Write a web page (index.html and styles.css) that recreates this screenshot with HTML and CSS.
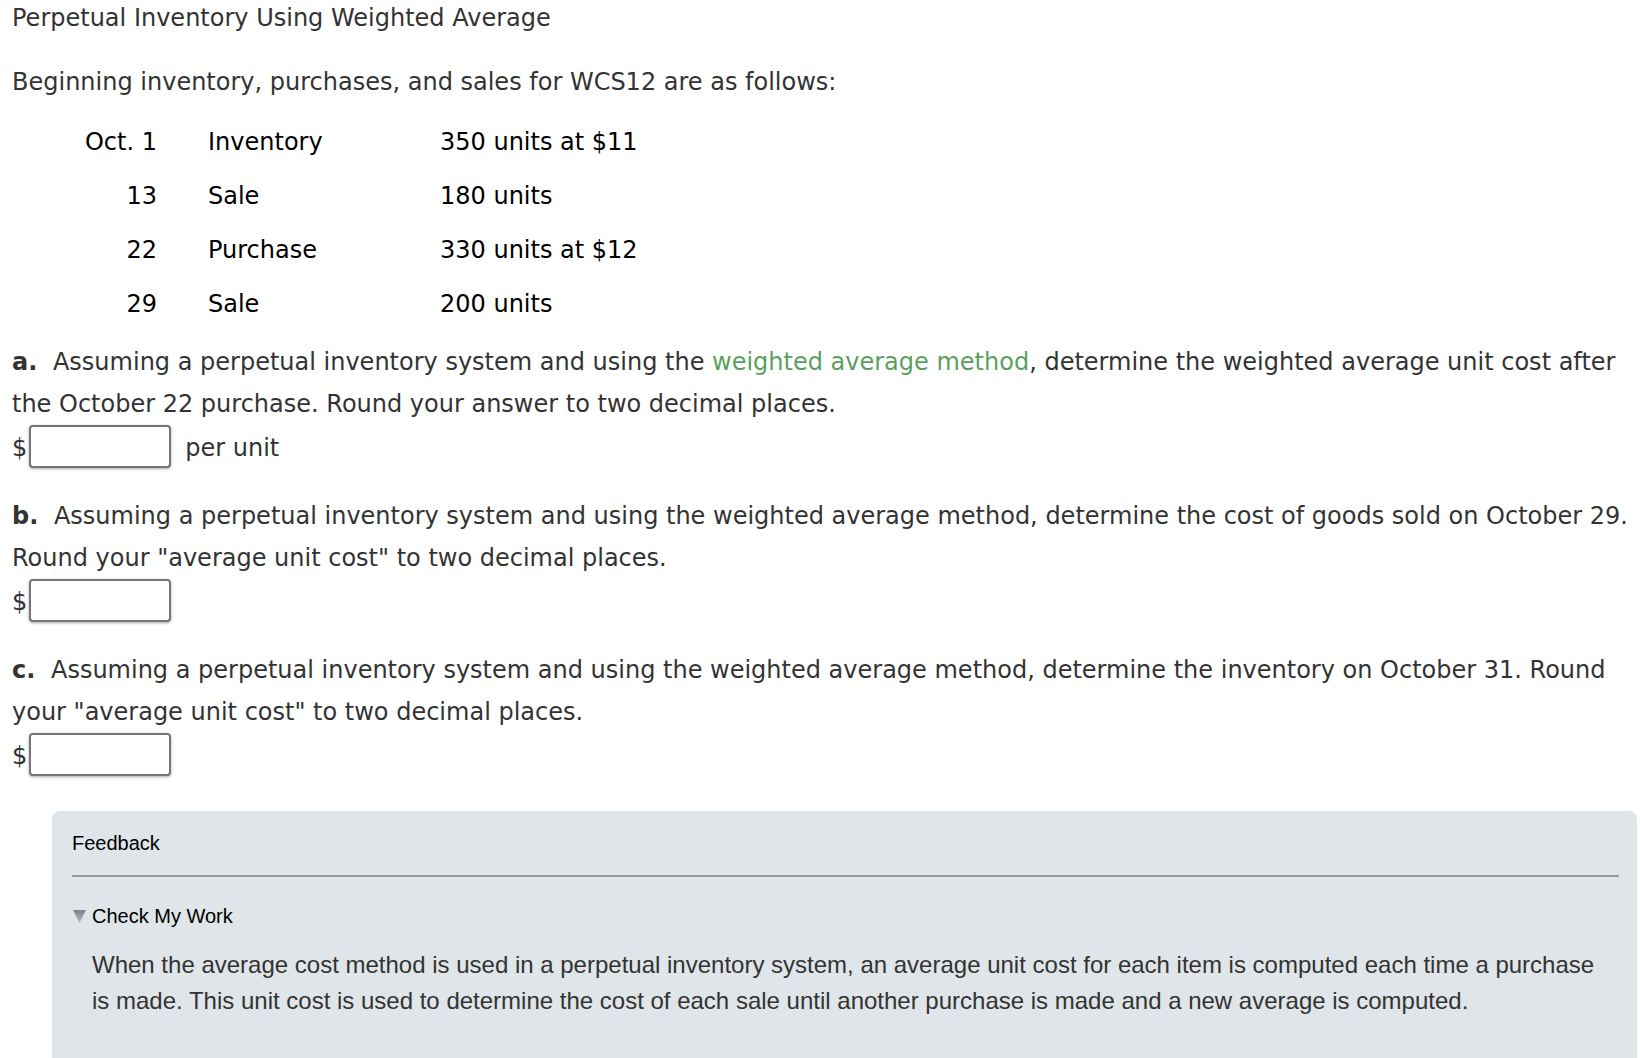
FILE: index.html
```html
<!DOCTYPE html>
<html lang="en">
<head>
  <meta charset="UTF-8" />
  <title>Perpetual Inventory Using Weighted Average</title>
  <link rel="stylesheet" href="styles.css">
</head>
<body>

  <div class="problem">
    <div class="title">Perpetual Inventory Using Weighted Average</div>

    <p class="intro">Beginning inventory, purchases, and sales for WCS12 are as follows:</p>

    <!-- Inventory transactions -->
    <table class="inv-table">
      <tr>
        <td class="date">Oct. 1</td>
        <td class="desc">Inventory</td>
        <td class="qty">350 units at $11</td>
      </tr>
      <tr>
        <td class="date">13</td>
        <td class="desc">Sale</td>
        <td class="qty">180 units</td>
      </tr>
      <tr>
        <td class="date">22</td>
        <td class="desc">Purchase</td>
        <td class="qty">330 units at $12</td>
      </tr>
      <tr>
        <td class="date">29</td>
        <td class="desc">Sale</td>
        <td class="qty">200 units</td>
      </tr>
    </table>

    <!-- Part a -->
    <div class="question first">
      <p><b class="part">a.</b> Assuming a perpetual inventory system and using the <span class="term">weighted average method</span>, determine the weighted average unit cost after the October 22 purchase. Round your answer to two decimal places.</p>
      <div class="answer">
        <span class="currency">$</span>
        <input type="text" class="answer-input">
        <span class="unit">per unit</span>
      </div>
    </div>

    <!-- Part b -->
    <div class="question">
      <p><b class="part">b.</b> Assuming a perpetual inventory system and using the weighted average method, determine the cost of goods sold on October 29. Round your "average unit cost" to two decimal places.</p>
      <div class="answer">
        <span class="currency">$</span>
        <input type="text" class="answer-input">
      </div>
    </div>

    <!-- Part c -->
    <div class="question">
      <p><b class="part">c.</b> Assuming a perpetual inventory system and using the weighted average method, determine the inventory on October 31. Round your "average unit cost" to two decimal places.</p>
      <div class="answer">
        <span class="currency">$</span>
        <input type="text" class="answer-input">
      </div>
    </div>
  </div>

  <!-- Feedback -->
  <div class="feedback">
    <div class="feedback-head">Feedback</div>
    <div class="check-work">
      <svg class="toggle" width="13" height="13" viewBox="0 0 13 13">
        <defs>
          <linearGradient id="triGrad" x1="0" y1="0" x2="0" y2="1">
            <stop offset="0" stop-color="#7d8387" />
            <stop offset="1" stop-color="#b4b9bc" />
          </linearGradient>
        </defs>
        <polygon points="0,0 13,0 6.5,13" fill="url(#triGrad)" />
      </svg>
      <span>Check My Work</span>
    </div>
    <p class="feedback-text">When the average cost method is used in a perpetual inventory system, an average unit cost for each item is computed each time a purchase is made. This unit cost is used to determine the cost of each sale until another purchase is made and a new average is computed.</p>
  </div>

</body>
</html>
```

FILE: styles.css
```css
* {
  box-sizing: border-box;
}

body {
  margin: 0;
  background-color: #fff;
  color: #333;
  font-family: Verdana, "DejaVu Sans", sans-serif;
  font-size: 24px;
}

.problem {
  padding-left: 12px;
  padding-right: 10px;
}

.title {
  line-height: 36px;
}

.intro {
  margin: 25px 0 0;
  line-height: 42px;
}

.inv-table {
  margin-top: 12px;
  border-collapse: collapse;
  color: #000;
}

.inv-table td {
  padding: 0;
  height: 54px;
  line-height: 54px;
  white-space: nowrap;
}

.inv-table .date {
  width: 145px;
  text-align: right;
}

.inv-table .desc {
  width: 283px;
  padding-left: 51px;
}

.question {
  margin-top: 27px;
}

.question.first {
  margin-top: 10px;
}

.question p {
  margin: 0;
  line-height: 42px;
}

.part {
  margin-right: 8px;
}

.term {
  color: #5b9f5e;
}

.answer {
  display: flex;
  align-items: center;
  height: 43px;
}

.currency,
.unit {
  line-height: 24px;
  padding-top: 2px;
}

.currency {
  margin-right: 2px;
}

.unit {
  margin-left: 14px;
}

.answer-input {
  width: 142px;
  height: 43px;
  border: 2px solid #767676;
  border-radius: 4px;
  background: #fff;
  box-shadow: 0 1px 3px rgba(0, 0, 0, 0.35);
  font-size: 24px;
  padding: 0 6px;
}

.feedback {
  margin: 35px 3px 0 52px;
  padding: 20px 18px 48px 20px;
  background-color: #dfe5e8;
  border-radius: 8px;
  font-family: Arial, "Liberation Sans", sans-serif;
}

.feedback-head {
  font-size: 20px;
  line-height: 24px;
  color: #000;
  padding-bottom: 20px;
  border-bottom: 2px solid #949a9e;
}

.check-work {
  display: flex;
  align-items: center;
  margin-top: 27px;
  font-size: 20px;
  line-height: 24px;
  color: #000;
}

.toggle {
  margin: 0 6px 0 1px;
}

.feedback-text {
  margin: 19px 0 0;
  padding: 0 4px 0 20px;
  font-size: 24px;
  line-height: 36px;
  color: #333;
}
```
